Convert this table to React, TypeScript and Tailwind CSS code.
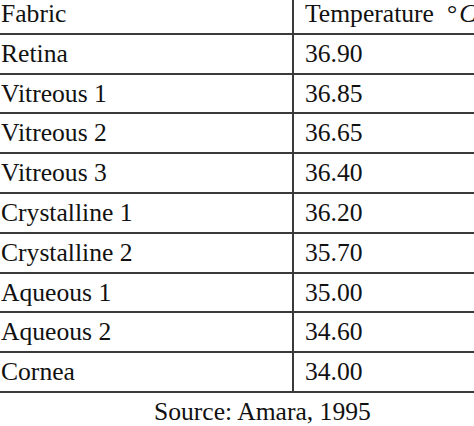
import React from 'react';

const rows: [string, string][] = [
  ['Retina', '36.90'],
  ['Vitreous 1', '36.85'],
  ['Vitreous 2', '36.65'],
  ['Vitreous 3', '36.40'],
  ['Crystalline 1', '36.20'],
  ['Crystalline 2', '35.70'],
  ['Aqueous 1', '35.00'],
  ['Aqueous 2', '34.60'],
  ['Cornea', '34.00'],
];

const Row = ({ left, right }: { left: React.ReactNode; right: React.ReactNode }) => (
  <div className="grid grid-cols-[294px_1fr] h-[39.8px] border-b-2 border-[#3a3a3a]">
    <div className="pl-[1px] border-r-2 border-[#3a3a3a] leading-[38.6px] whitespace-nowrap">{left}</div>
    <div className="pl-[11px] leading-[38.6px] whitespace-nowrap overflow-hidden">{right}</div>
  </div>
);

const App = () => {
  return (
    <div
      className="w-[474px] h-[426px] overflow-hidden bg-white text-[25.6px] text-[#111]"
      style={{ fontFamily: '"Liberation Serif", "Times New Roman", serif' }}
    >
      <div className="mt-[-5px]">
        <Row
          left="Fabric"
          right={
            <>
              Temperature<span className="ml-[13px]">°</span>
              <span className="italic ml-[2px]">C</span>
            </>
          }
        />
        {rows.map(([f, t]) => (
          <Row key={f} left={f} right={t} />
        ))}
      </div>
      <div className="pt-[4px] pl-[154px] leading-[30px] whitespace-nowrap">Source: Amara, 1995</div>
    </div>
  );
};

export default App;
